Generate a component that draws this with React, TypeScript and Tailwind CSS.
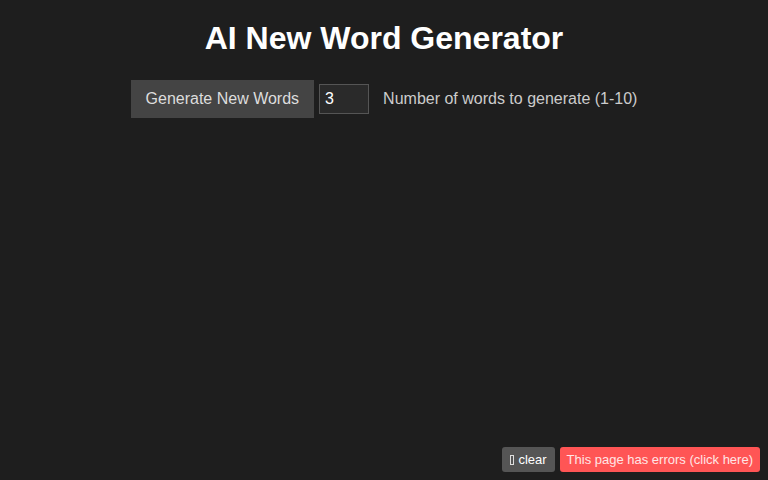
export default function App() {
  return (
    <div className="relative min-h-[480px] w-full bg-[#1e1e1e] text-white" style={{ fontFamily: '"Liberation Sans", Arial, sans-serif' }}>
      <div className="flex flex-col items-center pt-[20px]">
        <h1 className="text-[32px] font-bold leading-[37px]">AI New Word Generator</h1>
        <div className="mt-[23px] flex items-center">
          <button className="h-[38px] bg-[#444444] px-[15px] text-[16px] text-[#dddddd]">Generate New Words</button>
          <input
            type="number"
            defaultValue={3}
            className="ml-[5px] h-[30px] w-[50px] border border-[#555555] bg-[#2a2a2a] px-[5px] text-[16px] text-white outline-none [appearance:textfield]"
          />
          <span className="ml-[14px] text-[16px] text-[#cccccc]">Number of words to generate (1-10)</span>
        </div>
      </div>
      <div className="absolute bottom-[8px] right-[8px] flex items-center gap-[5px] text-[13px]">
        <button className="flex h-[25px] items-center rounded-[3px] bg-[#555555] px-[8px] text-white">
          <span className="mr-[4px] inline-block h-[10px] w-[4px] border border-white/80" />
          clear
        </button>
        <button className="h-[25px] rounded-[3px] bg-[#ff5555] px-[7px] text-[#ffe5e5]">This page has errors (click here)</button>
      </div>
    </div>
  );
}
